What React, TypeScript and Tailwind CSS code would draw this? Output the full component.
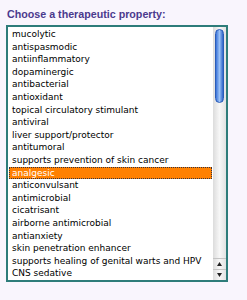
import React from "react";

const properties = [
  "mucolytic",
  "antispasmodic",
  "antiinflammatory",
  "dopaminergic",
  "antibacterial",
  "antioxidant",
  "topical circulatory stimulant",
  "antiviral",
  "liver support/protector",
  "antitumoral",
  "supports prevention of skin cancer",
  "analgesic",
  "anticonvulsant",
  "antimicrobial",
  "cicatrisant",
  "airborne antimicrobial",
  "antianxiety",
  "skin penetration enhancer",
  "supports healing of genital warts and HPV",
  "CNS sedative",
];

const selected = "analgesic";

/* Aqua-style vertical scrollbar */
const Scrollbar = () => (
  <div className="flex h-full w-[13px] flex-col bg-gradient-to-r from-[#dcdcdc] via-[#f7f7f7] to-[#e2e2e2]">
    <div className="flex-1 px-[2px] pt-[2px]">
      <div className="h-[74px] w-full rounded-full border border-[#2a5cb8] bg-gradient-to-r from-[#3a72d8] via-[#9cc2f6] to-[#2f64c8]" />
    </div>
    <div className="flex h-[11px] items-center justify-center border-t border-[#c4c4c4]">
      <svg width="5" height="4" viewBox="0 0 5 4">
        <path d="M2.5 0 L5 4 L0 4 Z" fill="#222" />
      </svg>
    </div>
    <div className="flex h-[11px] items-center justify-center border-t border-[#c4c4c4]">
      <svg width="5" height="4" viewBox="0 0 5 4">
        <path d="M0 0 L5 0 L2.5 4 Z" fill="#222" />
      </svg>
    </div>
  </div>
);

export default function App() {
  return (
    <div
      className="h-[300px] w-[247px] bg-[#f9f5fd] pl-[6px] pt-[8px]"
      style={{ fontFamily: '"DejaVu Sans", Verdana, sans-serif' }}
    >
      <h2
        className="pl-[1px] text-[10.7px] font-bold leading-[13px] text-[#4b3a8e]"
        style={{ fontFamily: '"Liberation Sans", Arial, sans-serif' }}
      >
        Choose a therapeutic property:
      </h2>
      <div className="mt-[4px] flex h-[257px] w-[222px] border-2 border-[#2e7c7a] bg-white">
        <ul className="flex-1 overflow-hidden pl-[1px] pr-[1px] pt-[1px] text-[9px] text-black">
          {properties.map((p) => (
            <li
              key={p}
              className={
                p === selected
                  ? "h-[12.6px] whitespace-nowrap border border-dotted border-[#334] bg-[#ff8000] pl-[2px] leading-[10.6px] text-white"
                  : "h-[12.6px] whitespace-nowrap pl-[3px] leading-[12.6px]"
              }
            >
              {p}
            </li>
          ))}
        </ul>
        <Scrollbar />
      </div>
    </div>
  );
}
